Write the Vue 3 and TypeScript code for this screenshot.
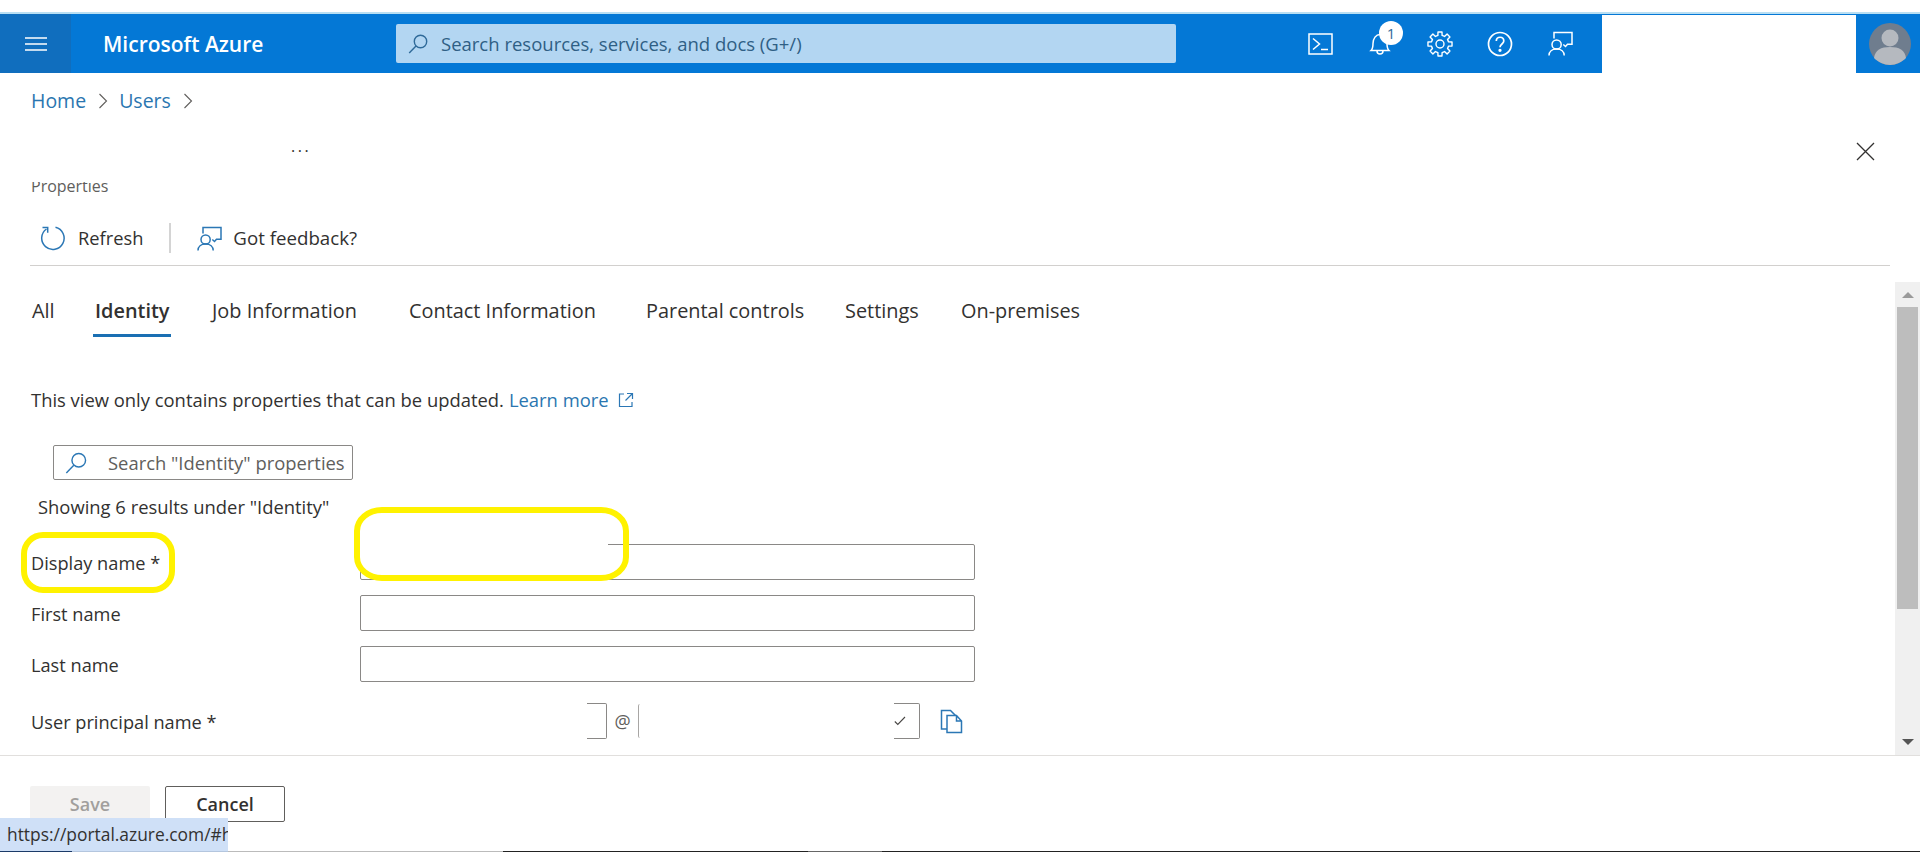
<template>
  <div class="page">
    <header class="topbar">
      <button class="menu-btn" aria-label="Menu">
        <svg width="22" height="14" viewBox="0 0 22 14"><path d="M0 1h22M0 7h22M0 13h22" stroke="#fff" stroke-width="1.6" /></svg>
      </button>
      <div class="brand">Microsoft Azure</div>
      <div class="global-search">
        <svg width="20" height="20" viewBox="0 0 20 20" fill="none" stroke="#2f6a99" stroke-width="1.4">
          <circle cx="12.5" cy="7.5" r="6.2" />
          <path d="M8 12 1.2 19" />
        </svg>
        <span>Search resources, services, and docs (G+/)</span>
      </div>
      <nav class="top-icons">
        <button class="top-icon">
          <svg width="25" height="22" viewBox="0 0 25 22" fill="none" stroke="#fff" stroke-width="1.5">
            <rect x="1" y="1" width="23" height="20" />
            <path d="m5 5.5 6.5 5.5L5 16.5M13 16.5h7" />
          </svg>
        </button>
        <button class="top-icon bell">
          <svg width="26" height="24" viewBox="0 0 26 24" fill="none" stroke="#fff" stroke-width="1.5">
            <path d="M4 18.5c2-2 2-4 2-7 0-5 3-9 7-9s7 4 7 9c0 3 0 5 2 7zM10 19c0 4 6 4 6 0" />
          </svg>
          <span class="badge">1</span>
        </button>
        <button class="top-icon">
          <svg width="26" height="26" viewBox="0 0 26 26" fill="none" stroke="#fff" stroke-width="1.4">
            <path :d="gearPath" stroke-linejoin="round" />
            <circle cx="13" cy="13" r="4" />
          </svg>
        </button>
        <button class="top-icon">
          <svg width="26" height="26" viewBox="0 0 26 26" fill="none" stroke="#fff" stroke-width="1.7">
            <circle cx="13" cy="13" r="11.5" />
            <path d="M9.3 10c0-5 7.5-5 7.5 0 0 3-3.8 3-3.8 6.3" />
            <circle cx="13" cy="19.3" r=".8" fill="#fff" />
          </svg>
        </button>
        <button class="top-icon">
          <svg width="25" height="25" viewBox="0 0 25 25" fill="none" stroke="#fff" stroke-width="1.5">
            <path d="M6 7.5v-6h18v11.700h-4.500l-2 2.300-2.200-2" />
            <circle cx="8.600" cy="13.500" r="4.600" />
            <path d="M1 24.500c0-4 3-6.500 7.600-6.500s7.600 2.500 7.600 6.500" />
          </svg>
        </button>
      </nav>
      <div class="account-blank"></div>
      <div class="avatar">
        <svg width="42" height="42" viewBox="0 0 42 42">
          <circle cx="21" cy="21" r="21" fill="#6f7d8e" />
          <circle cx="21" cy="15" r="8.5" fill="#b5b9bf" />
          <path d="M5 35c1-8 7-11 16-11s15 3 16 11c-4 4-10 7-16 7S9 39 5 35z" fill="#b5b9bf" />
        </svg>
      </div>
    </header>

    <div class="breadcrumb">
      <a>Home</a>
      <svg class="crumb-sep" width="10" height="16" viewBox="0 0 10 16" fill="none" stroke="#605e5c" stroke-width="1.1"><path d="m1.500 1 7 7-7 7" /></svg>
      <a>Users</a>
      <svg class="crumb-sep" width="10" height="16" viewBox="0 0 10 16" fill="none" stroke="#605e5c" stroke-width="1.1"><path d="m1.500 1 7 7-7 7" /></svg>
    </div>

    <div class="title-row">
      <span class="more">...</span>
      <svg width="19" height="19" viewBox="0 0 19 19" stroke="#323130" stroke-width="1.3"><path d="m1 1 17 17M18 1 1 18" /></svg>
    </div>
    <div class="subtitle-clip"><span>Properties</span></div>

    <div class="toolbar">
      <button class="tool">
        <svg width="26" height="26" viewBox="0 0 26 26" fill="none" stroke="#2b77b5" stroke-width="1.5">
          <path d="M15.5 2.300A11.200 11.200 0 1 1 6.500 4" />
          <path d="M2.500 2.500h5.200v5.200" />
        </svg>
        <span>Refresh</span>
      </button>
      <span class="tool-sep"></span>
      <button class="tool feedback">
        <svg width="25" height="25" viewBox="0 0 25 25" fill="none" stroke="#2b77b5" stroke-width="1.5">
          <path d="M6 7.5v-6h18v11.700h-4.500l-2 2.300-2.200-2" />
          <circle cx="8.600" cy="13.500" r="4.600" />
          <path d="M1 24.500c0-4 3-6.500 7.600-6.500s7.600 2.500 7.600 6.500" />
        </svg>
        <span>Got feedback?</span>
      </button>
    </div>

    <main class="body">
      <section class="content">
        <div class="tabs">
          <a v-for="tab in tabs" :key="tab" class="tab" :class="{ active: tab === 'Identity' }"><span>{{ tab }}</span></a>
        </div>

        <p class="intro">
          This view only contains properties that can be updated.
          <a class="link">Learn more</a>
          <svg width="16" height="16" viewBox="0 0 16 16" fill="none" stroke="#2b77b5" stroke-width="1.2"><path d="M6 2H1.500v12.500H14V10M9 1.500h5.500V7M14.500 1.500 7.500 8.500" /></svg>
        </p>

        <div class="prop-search">
          <svg width="22" height="22" viewBox="0 0 20 20" fill="none" stroke="#2b77b5" stroke-width="1.3">
            <circle cx="12.5" cy="7.5" r="6.2" />
            <path d="M8 12 1.2 19" />
          </svg>
          <span>Search "Identity" properties</span>
        </div>
        <p class="results">Showing 6 results under "Identity"</p>

        <div class="form">
          <div v-for="row in rows" :key="row" class="form-row">
            <label>{{ row }}</label>
            <input class="text-input" type="text" />
          </div>
          <div class="form-row upn">
            <label>User principal name *</label>
            <div class="upn-fields">
              <span class="upn-name"></span>
              <span class="at">@</span>
              <span class="upn-domain-left"></span>
              <span class="upn-domain">
                <svg width="12" height="10" viewBox="0 0 12 10" fill="none" stroke="#484644" stroke-width="1.1"><path d="m.8 5.500 3 3L11 1" /></svg>
              </span>
              <svg class="copy" width="23" height="25" viewBox="0 0 23 25" fill="none" stroke="#2b77b5" stroke-width="1.5">
                <path d="M7 20H1.500V1.500h9l5 5" />
                <path d="M7 6.500h9.500l5 5.500v11.500H7zM16.500 6.500V12h5" />
              </svg>
            </div>
          </div>
        </div>
      </section>
      <aside class="scrollbar">
        <span class="arrow-up"></span>
        <span class="thumb"></span>
        <span class="arrow-down"></span>
      </aside>
    </main>

    <footer class="actions">
      <button class="btn save">Save</button>
      <button class="btn cancel">Cancel</button>
    </footer>
    <div class="bottom-edge"></div>

    <!-- yellow marks drawn on the screenshot -->
    <span class="mark mark-label"></span>
    <span class="mark mark-value"></span>

    <div class="status-bubble"><span>https://portal.azure.com/#home</span></div>
  </div>
</template>

<script setup lang="ts">
const tabs = ['All', 'Identity', 'Job Information', 'Contact Information', 'Parental controls', 'Settings', 'On-premises']

const rows = ['Display name *', 'First name', 'Last name']

// 8 tooth gear outline
function buildGear(): string {
  const cx = 13
  const cy = 13
  const pts: string[] = []
  const teeth = 8
  for (let i = 0; i < teeth; i++) {
    const a = (i / teeth) * Math.PI * 2
    const step = Math.PI / teeth
    const p = (r: number, t: number) => `${(cx + r * Math.cos(t)).toFixed(2)} ${(cy + r * Math.sin(t)).toFixed(2)}`
    pts.push(p(12.2, a - step * 0.42), p(12.2, a + step * 0.42), p(8.8, a + step * 0.62), p(8.8, a + step * 1.38))
  }
  return 'M' + pts.join('L') + 'Z'
}
const gearPath = buildGear()
</script>

<style>
html,
body {
  margin: 0;
  background: #fff;
}
</style>

<style scoped>
.page {
  position: relative;
  width: 1920px;
  height: 852px;
  overflow: hidden;
  background: #fff;
  color: #323130;
  font-family: "Open Sans", "Liberation Sans", sans-serif;
  display: flex;
  flex-direction: column;
}

button {
  font-family: inherit;
  border: none;
  background: none;
  padding: 0;
  color: inherit;
}

p {
  margin: 0;
}

/* top bar */
.topbar {
  margin-top: 12px;
  height: 59px;
  flex: none;
  display: flex;
  align-items: stretch;
  background: #0478d6;
  border-top: 2px solid #b9dff3;
}

.menu-btn {
  width: 71px;
  background: #106ebe;
  display: flex;
  align-items: center;
  justify-content: center;
}

.brand {
  width: 293px;
  padding-left: 32px;
  box-sizing: border-box;
  align-self: center;
  color: #fff;
  font-size: 21px;
  font-weight: 600;
}

.global-search {
  margin-left: 32px;
  align-self: center;
  width: 780px;
  height: 39px;
  background: #b3d6f2;
  border-radius: 2px;
  display: flex;
  align-items: center;
  gap: 13px;
  padding-left: 12px;
  box-sizing: border-box;
  color: #2f5f85;
  font-size: 18.5px;
}

.top-icons {
  margin-left: auto;
  display: flex;
  align-items: center;
}

.top-icon {
  position: relative;
  width: 60px;
  display: flex;
  align-items: center;
  justify-content: center;
}

.badge {
  position: absolute;
  left: 29px;
  top: -11px;
  width: 24px;
  height: 24px;
  border-radius: 50%;
  background: #fff;
  color: #2f6a99;
  font-size: 15px;
  line-height: 24px;
  text-align: center;
}

.account-blank {
  width: 254px;
  margin-left: 12px;
  margin-top: 1px;
  background: #fff;
}

.avatar {
  width: 64px;
  display: flex;
  align-items: center;
  padding-left: 13px;
  box-sizing: border-box;
}

/* breadcrumb */
.breadcrumb {
  height: 54px;
  flex: none;
  display: flex;
  align-items: center;
  padding-left: 31px;
  font-size: 19.5px;
  color: #2a76b0;
}

.crumb-sep {
  margin: 2px 11px 0 12px;
}

.title-row {
  height: 48px;
  flex: none;
  display: flex;
  align-items: center;
  justify-content: space-between;
  padding: 0 45px 0 291px;
}

.more {
  font-size: 16px;
  line-height: 1;
  letter-spacing: 2.5px;
  margin-top: -10px;
}

.subtitle-clip {
  height: 18px;
  margin-top: 7px;
  flex: none;
  overflow: hidden;
  padding-left: 31px;
  font-size: 16px;
  line-height: 22px;
  color: #605e5c;
}

.subtitle-clip span {
  display: block;
  margin-top: -7px;
}

/* toolbar */
.toolbar {
  margin-left: 30px;
  width: 1860px;
  height: 66px;
  flex: none;
  box-sizing: border-box;
  display: flex;
  align-items: center;
  padding: 11px 0 0 10px;
  border-bottom: 1px solid #d2d0ce;
}

.tool {
  display: flex;
  align-items: center;
  gap: 12px;
  font-size: 18.3px;
  color: #323130;
}

.tool span {
  margin-top: -2px;
}

.tool.feedback {
  font-size: 18.7px;
  gap: 11px;
}

.tool-sep {
  width: 2px;
  height: 30px;
  margin: 0 26px 0 26px;
  background: #d4d4d4;
}

/* scrolling area */
.body {
  height: 490px;
  flex: none;
  box-sizing: border-box;
  display: flex;
  border-bottom: 1px solid #e1dfdd;
  overflow: hidden;
}

.content {
  flex: 1;
  padding-left: 31px;
}

.tabs {
  display: grid;
  grid-template-columns: 63px 117px 197px 237px 199px 116px auto;
  height: 71px;
  padding: 22px 0 0 1px;
  box-sizing: border-box;
  font-size: 19.9px;
}

.tab span {
  display: inline-block;
  line-height: 46px;
  padding: 0 2px;
  margin-left: -2px;
  border-bottom: 3px solid transparent;
}

.tab.active span {
  font-weight: 600;
  border-bottom-color: #1a6fb3;
}

.intro {
  margin-top: 50px;
  display: flex;
  align-items: center;
  gap: 5px;
  font-size: 18.4px;
  line-height: 26px;
}

.link {
  color: #2a76b0;
}

.intro svg {
  margin-left: 4px;
}

.prop-search {
  margin: 32px 0 0 22px;
  width: 300px;
  height: 35px;
  box-sizing: border-box;
  border: 1px solid #8a8886;
  border-radius: 2px;
  display: flex;
  align-items: center;
  gap: 21px;
  padding-left: 11px;
  font-size: 18.4px;
  color: #605e5c;
  white-space: nowrap;
}

.results {
  margin: 14px 0 0 7px;
  font-size: 18.4px;
  line-height: 26px;
}

.form {
  margin-top: 24px;
}

.form-row {
  display: grid;
  grid-template-columns: 329px 615px;
  align-items: center;
  height: 36px;
  margin-bottom: 15px;
  font-size: 18.2px;
}

.form-row label {
  padding-top: 2px;
}

.text-input {
  height: 36px;
  box-sizing: border-box;
  border: 1px solid #8a8886;
  border-radius: 2px;
  background: #fff;
  outline: none;
}

.upn {
  margin-top: 21px;
}

.upn-fields {
  display: flex;
  align-items: center;
  height: 36px;
}

.upn-name {
  margin-left: 227px;
  width: 19px;
  height: 34px;
  border: 1px solid #8a8886;
  border-left: none;
  border-radius: 0 2px 2px 0;
}

.at {
  width: 17px;
  margin-left: 7px;
  text-align: center;
  font-size: 18px;
  color: #605e5c;
}

.upn-domain-left {
  width: 3px;
  height: 34px;
  margin-left: 7px;
  border-left: 1px solid #a8a6a4;
  border-radius: 2px 0 0 2px;
}

.upn-domain {
  width: 25px;
  height: 34px;
  margin-left: 252px;
  border: 1px solid #8a8886;
  border-left: none;
  border-radius: 0 2px 2px 0;
  display: flex;
  align-items: center;
}

.copy {
  margin-left: 20px;
}

/* scrollbar */
.scrollbar {
  width: 25px;
  margin-top: 16px;
  background: #f0f0f0;
  display: flex;
  flex-direction: column;
  align-items: center;
}

.arrow-up,
.arrow-down {
  width: 0;
  height: 0;
  border-left: 6px solid transparent;
  border-right: 6px solid transparent;
}

.arrow-up {
  margin: 10px 0 9px;
  border-bottom: 6px solid #9a9a9a;
}

.thumb {
  width: 21px;
  height: 302px;
  background: #bdbdbd;
}

.arrow-down {
  margin: auto 0 10px;
  border-top: 6px solid #555;
}

/* footer */
.actions {
  flex: 1;
  display: flex;
  gap: 15px;
  padding: 30px 0 0 30px;
}

.btn {
  width: 120px;
  height: 36px;
  box-sizing: border-box;
  border-radius: 2px;
  font-size: 18px;
  font-weight: 600;
}

.save {
  background: #f3f2f1;
  color: #a19f9d;
}

.cancel {
  background: #fff;
  border: 1px solid #605e5c;
  color: #323130;
}

/* taskbar edge peeking in at the very bottom */
.bottom-edge {
  height: 1px;
  flex: none;
  background: linear-gradient(to right, #1b3a68 72px, #b4c6de 72px, #b4c6de 228px, #bbb 228px, #bbb 503px, #222 503px, #222 808px, #666 808px, #666 882px, #222 882px);
}

/* highlight marks */
.mark {
  position: absolute;
  box-sizing: border-box;
  border: 6px solid #fff200;
}

.mark-label {
  left: 21px;
  top: 532px;
  width: 154px;
  height: 61px;
  border-radius: 22px;
}

.mark-value {
  left: 354px;
  top: 507px;
  width: 275px;
  height: 74px;
  border-radius: 28px / 24px;
  background: linear-gradient(to right, #fff 248px, transparent 248px);
}

.status-bubble {
  position: absolute;
  left: 0;
  bottom: 1px;
  width: 228px;
  height: 33px;
  overflow: hidden;
  box-sizing: border-box;
  padding-left: 7px;
  background: #cfe0f7;
  font-size: 17.4px;
  line-height: 33px;
  white-space: nowrap;
}
</style>
